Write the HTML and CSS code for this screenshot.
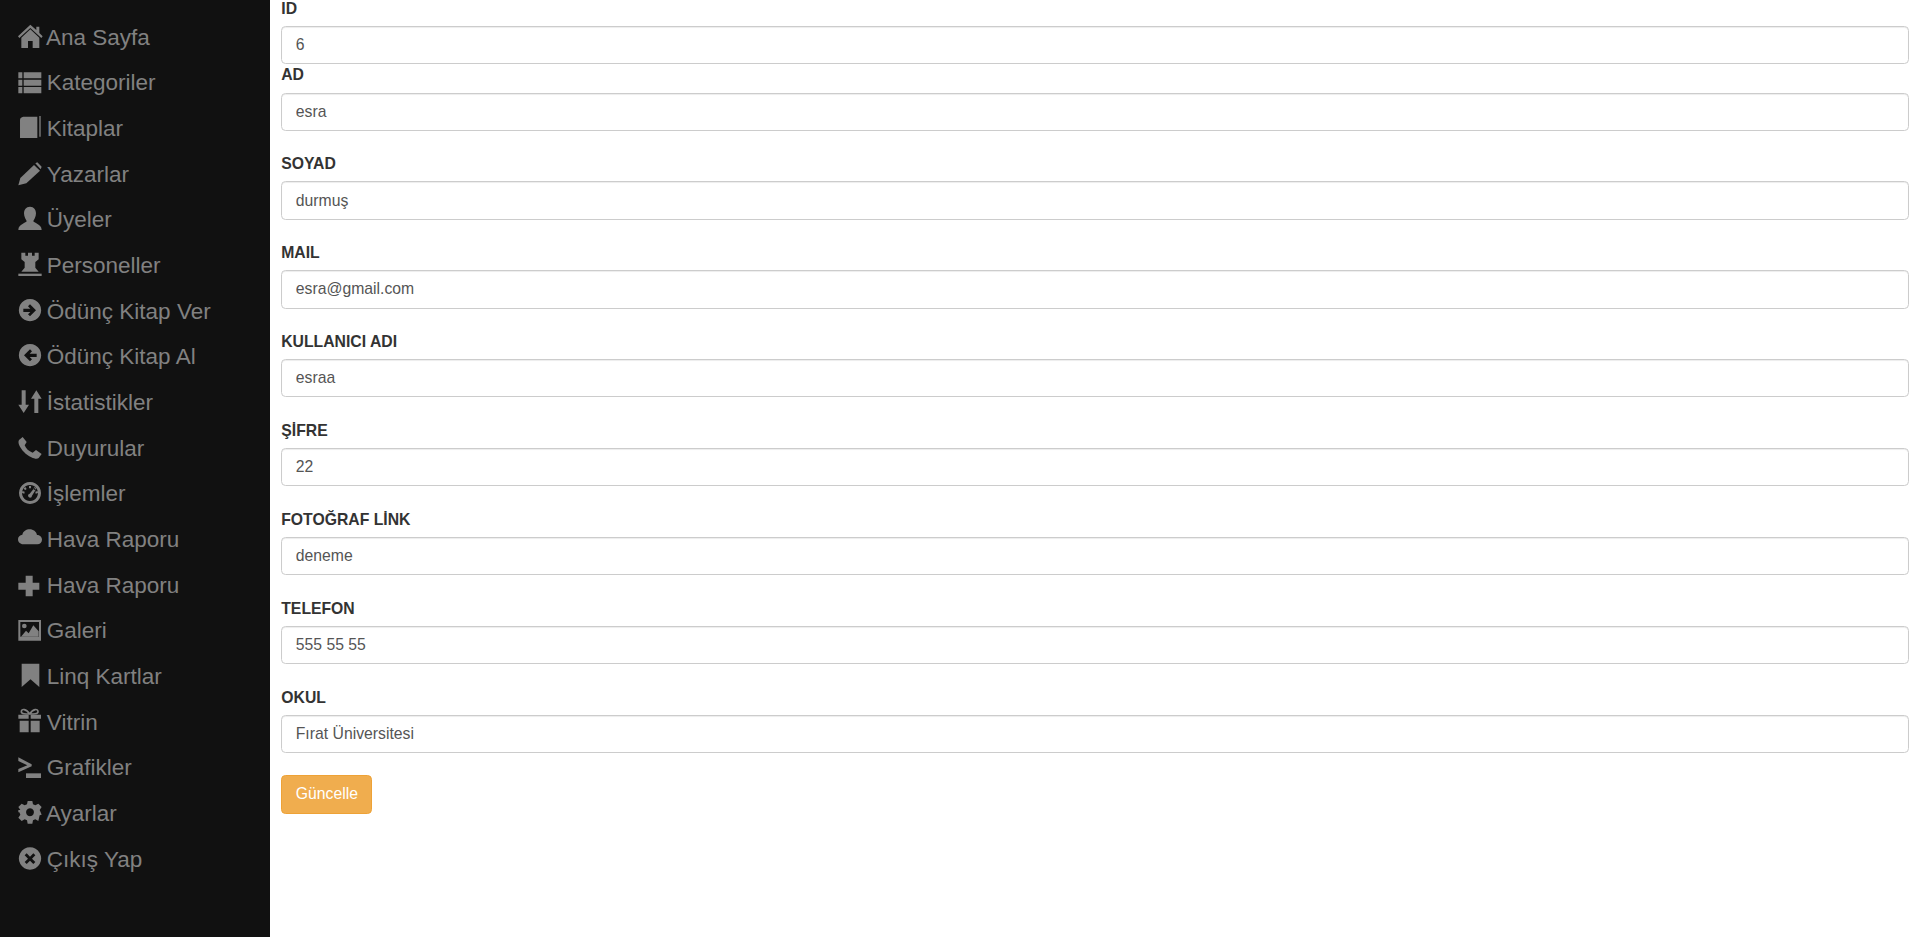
FILE: index.html
```html
<!DOCTYPE html>
<html lang="tr">
<head>
    <meta charset="UTF-8">
    <meta name="viewport" content="width=device-width, initial-scale=1.0">
    <title>Üye Güncelle</title>
    <link rel="stylesheet" href="styles.css">
</head>
<body>
    <div class="layout">
        <nav class="sidenav">
            <a class="narrow" href="#"><svg viewBox="0 -4 72 80"><path d="M37-5 55 11V1h9v19l10 10-4 5L37 5 4 35l-4-5z"/><path d="M37 9 64 34V65H44V44H30V65H10V34z"/></svg><span>Ana Sayfa</span></a>
            <a href="#"><svg viewBox="0 -4 72 80"><path d="M1 3h12v18H1zM17 3h53v18H17zM1 25h12v18H1zM17 25h53v18H17zM1 47h12v19H1zM17 47h53v19H17z"/></svg><span>Kategoriler</span></a>
            <a href="#"><svg viewBox="0 -4 72 80"><path d="M6 8Q6 0 16-2H58V62H6z"/><path d="M64-4h4V58h-4z"/></svg><span>Kitaplar</span></a>
            <a href="#"><svg viewBox="0 -4 72 80"><path d="M1 66 7 44 48 5 66 22 25 60z"/><path d="M52 0 58-3 71 10 68 18z"/></svg><span>Yazarlar</span></a>
            <a href="#"><svg viewBox="0 -4 72 80"><path d="M36-5C48-5 54 4 54 15 54 26 48 34 46 38 46 44 71 46 71 65H1C1 46 26 44 26 38 24 34 18 26 18 15 18 4 24-5 36-5z"/></svg><span>Üyeler</span></a>
            <a href="#"><svg viewBox="0 -4 72 80"><path d="M10-5H22V4h8V-5H42V4h8V-5H62V15L52 23V40L62 52H10L20 40V23L10 15z"/><path d="M1 58H71v7H1z"/></svg><span>Personeller</span></a>
            <a href="#"><svg viewBox="0 -4 72 80"><path fill-rule="evenodd" d="M36-4a33.500 33.500 0 1 0 .01 0zM36 12 54 30 36 48 30 42 37 35H16V25H37L30 18z"/></svg><span>Ödünç Kitap Ver</span></a>
            <a href="#"><svg viewBox="0 -4 72 80"><path fill-rule="evenodd" d="M36-4a33.500 33.500 0 1 0 .01 0zM36 12 18 30 36 48 42 42 35 35H56V25H35L42 18z"/></svg><span>Ödünç Kitap Al</span></a>
            <a href="#"><svg viewBox="0 -4 72 80"><path d="M11-3H23V40H33L17 65 1 40H11z"/><path d="M55-3 71 22H61V65H49V22H39z"/></svg><span>İstatistikler</span></a>
            <a href="#"><svg viewBox="0 -4 72 80"><path d="M3 8 14-1 26 14 20 24C24 34 32 42 44 46L54 38 71 50 62 62C58 66 50 65 40 60 24 52 10 38 3 22 1 16 1 12 3 8z"/></svg><span>Duyurular</span></a>
            <a href="#"><svg viewBox="0 -4 72 80"><path fill-rule="evenodd" d="M36-1a33 33 0 1 0 .01 0zM36 8A24 24 0 1 1 35.990 8z"/><path d="M33 11h6v7h-6zM17 18l5-4 4 6-5 4zM12 32l1-6 7 2-1 6zM55 18l-5-4-4 6 5 4zM60 32l-1-6-7 2 1 6zM49 17l5 4-12 19a6 6 0 1 1-7-6z"/></svg><span>İşlemler</span></a>
            <a href="#"><svg viewBox="0 -4 72 80"><path d="M16 48C6 48 0 41 0 33 0 25 6 20 13 19 15 9 25 3 35 3 46 3 55 10 57 20 65 20 72 26 72 34 72 42 66 48 58 48z"/></svg><span>Hava Raporu</span></a>
            <a href="#"><svg viewBox="0 -4 72 80"><path d="M23 4H44V25H64V46H44V66H23V46H1V25H23z"/></svg><span>Hava Raporu</span></a>
            <a href="#"><svg viewBox="0 -4 72 80"><path fill-rule="evenodd" d="M1 2H69V64H1zM7 8V52H63V8z"/><circle cx="19" cy="20" r="7"/><path d="M9 52 24 34 32 42 46 18 62 36V52z"/></svg><span>Galeri</span></a>
            <a href="#"><svg viewBox="0 -4 72 80"><path d="M11-5H64V65L37.500 42 11 65z"/></svg><span>Linq Kartlar</span></a>
            <a href="#"><svg viewBox="0 -4 72 80"><path d="M1 10H32V22H1zM38 10H69V22H38zM5 28H32V63H5zM38 28H65V63H38z"/><path class="bow" d="M35 8C25-8 10-9 10 1 10 8 22 8 35 8 48 8 60 8 60 1 60-9 45-8 35 8"/></svg><span>Vitrin</span></a>
            <a href="#"><svg viewBox="0 -4 72 80"><path d="M1 3 41 24V30L1 48V38L28 27 1 14z"/><path d="M24 51H69V65H24z"/></svg><span>Grafikler</span></a>
            <a class="narrow" href="#"><svg viewBox="0 -4 72 80"><path fill-rule="evenodd" d="M29-4H43L45 6 52 9 61 4 71 14 65 23 68 30 71 37 65 39 61 56 52 51 45 54 43 64H29L27 54 20 51 11 56 1 46 7 37 4 30H1V23L7 23 1 14 11 4 20 9 27 6zM36 18a12 12 0 1 0 .01 0z"/></svg><span>Ayarlar</span></a>
            <a href="#"><svg viewBox="0 -4 72 80"><path fill-rule="evenodd" d="M36-3a33.500 33.500 0 1 0 .01 0zM26 15 36 25 46 15 52 21 42 31 52 41 46 47 36 37 26 47 20 41 30 31 20 21z"/></svg><span>Çıkış Yap</span></a>
        </nav>

        <main class="content">
            <form class="edit-form">
                <div class="form-group tight">
                    <label for="id">ID</label>
                    <input class="form-control" id="id" type="text" value="6">
                </div>
                <div class="form-group">
                    <label for="ad">AD</label>
                    <input class="form-control" id="ad" type="text" value="esra">
                </div>
                <div class="form-group">
                    <label for="soyad">SOYAD</label>
                    <input class="form-control" id="soyad" type="text" value="durmuş">
                </div>
                <div class="form-group">
                    <label for="mail">MAIL</label>
                    <input class="form-control" id="mail" type="text" value="esra@gmail.com">
                </div>
                <div class="form-group">
                    <label for="kullanici">KULLANICI ADI</label>
                    <input class="form-control" id="kullanici" type="text" value="esraa">
                </div>
                <div class="form-group">
                    <label for="sifre">ŞİFRE</label>
                    <input class="form-control" id="sifre" type="text" value="22">
                </div>
                <div class="form-group">
                    <label for="foto">FOTOĞRAF LİNK</label>
                    <input class="form-control" id="foto" type="text" value="deneme">
                </div>
                <div class="form-group">
                    <label for="telefon">TELEFON</label>
                    <input class="form-control" id="telefon" type="text" value="555 55 55">
                </div>
                <div class="form-group">
                    <label for="okul">OKUL</label>
                    <input class="form-control" id="okul" type="text" value="Fırat Üniversitesi">
                </div>
                <button class="btn-warning" type="button">Güncelle</button>
            </form>
        </main>
    </div>
</body>
</html>
```

FILE: styles.css
```css
* {
    box-sizing: border-box;
}
body {
    margin: 0;
    font-family: "Liberation Sans", Arial, sans-serif;
    font-size: 15.75px;
    line-height: 22.5px;
    color: #333;
    background-color: #fff;
}
.layout {
    display: flex;
    height: 100vh;
    overflow: hidden;
}
.sidenav {
    flex: 0 0 270px;
    display: flex;
    flex-direction: column;
    padding-top: 15.2px;
    background-color: #111;
}
.sidenav a {
    flex: 0 0 45.67px;
    display: flex;
    align-items: center;
    padding-left: 18px;
    font-size: 22.5px;
    color: #818181;
    text-decoration: none;
}
.sidenav svg {
    flex: 0 0 24px;
    width: 24px;
    height: 26.67px;
    margin-right: 4.8px;
    fill: currentColor;
    overflow: visible;
}
.sidenav .narrow svg {
    margin-right: 4px;
}
.sidenav .bow {
    fill: none;
    stroke: currentColor;
    stroke-width: 5;
}
.content {
    flex: 1;
    padding: 0 11.25px;
}
.edit-form {
    margin-top: -2.1px;
}
.form-group {
    margin-bottom: 22.5px;
}
.form-group.tight {
    margin-bottom: 0.125px;
}
.form-group label {
    display: block;
    margin-bottom: 5.625px;
    font-weight: bold;
}
.form-control {
    display: block;
    width: 100%;
    height: 38.25px;
    padding: 6.75px 13.5px;
    font-family: inherit;
    font-size: 15.75px;
    line-height: 22.5px;
    color: #555;
    background-color: #fff;
    border: 1.125px solid #ccc;
    border-radius: 4.5px;
    box-shadow: inset 0 1px 1px rgba(0, 0, 0, 0.075);
}
.btn-warning {
    display: block;
    height: 38.25px;
    padding: 6.75px 13.5px;
    font-family: inherit;
    font-size: 15.75px;
    line-height: 22.5px;
    color: #fff;
    background-color: #f0ad4e;
    border: 1.125px solid #eea236;
    border-radius: 4.5px;
}
```
